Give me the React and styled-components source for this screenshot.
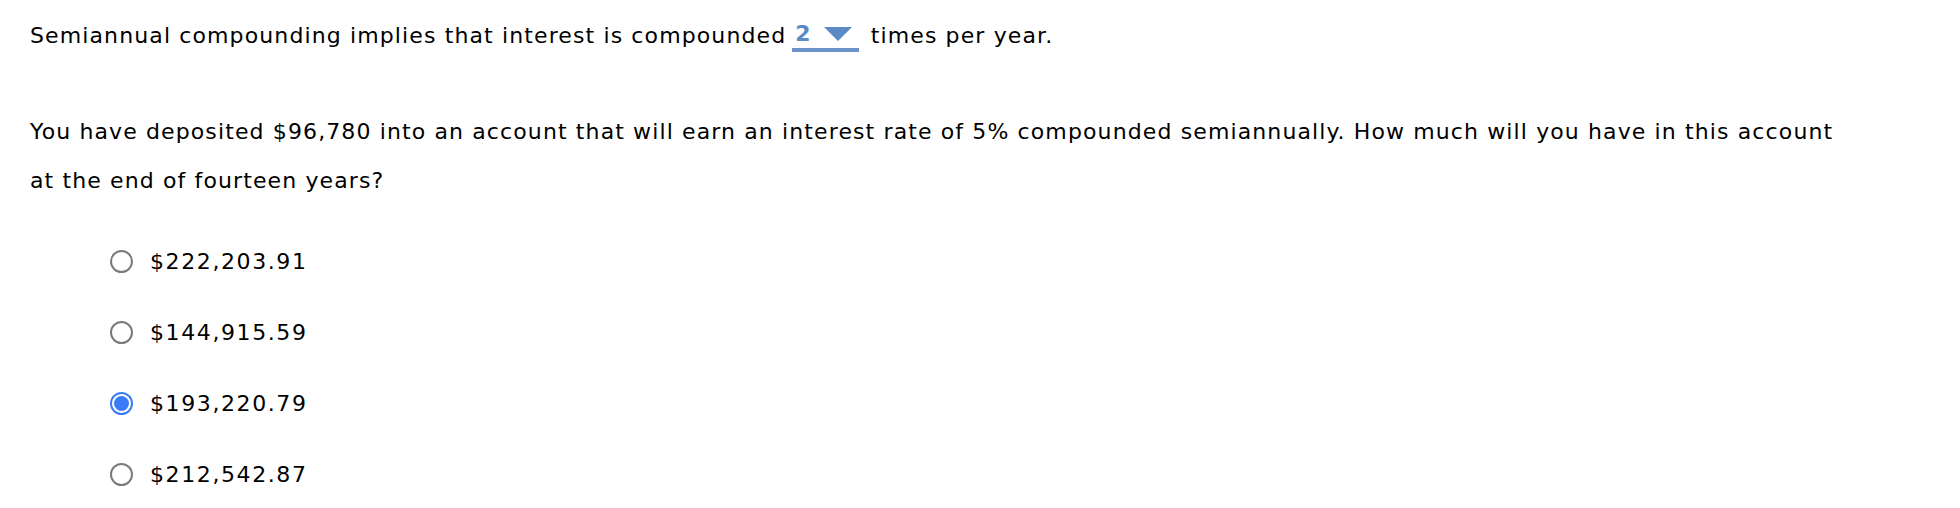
import React from "react"
import styled, { createGlobalStyle } from "styled-components"

const GlobalStyle = createGlobalStyle`
  html, body {
    margin: 0;
    padding: 0;
    background: #fff;
  }
  body {
    font-family: "DejaVu Sans", Verdana, sans-serif;
    color: #000;
  }
`

const Page = styled.div`
  padding: 16px 30px 0 30px;
  max-width: 1820px;
  font-size: 22px;
  letter-spacing: 1.12px;
`

const Line = styled.p`
  margin: 0;
  line-height: 40px;
  display: flex;
  align-items: center;
  white-space: pre;
`

const Question = styled.p`
  margin: 51px 0 0 0;
  line-height: 49px;
`

const Select = styled.span`
  display: inline-flex;
  align-items: center;
  gap: 12px;
  margin: 0 12px 0 6px;
  padding: 0 7px 0 3px;
  height: 31px;
  color: #5b8ac6;
  font-weight: bold;
  border-bottom: 4px solid #6b93c9;
  box-sizing: border-box;
`

const Caret = styled.svg`
  width: 28px;
  height: 14px;
  display: block;
`

const Options = styled.ul`
  list-style: none;
  margin: 41px 0 0 0;
  padding: 0 0 0 80px;
  display: flex;
  flex-direction: column;
  gap: 40px;
  letter-spacing: 1.6px;
`

const Option = styled.li`
  display: flex;
  align-items: center;
  gap: 17px;
  height: 31px;
`

const Radio = styled.span`
  width: 23px;
  height: 23px;
  border-radius: 50%;
  box-sizing: border-box;
  border: 2px solid ${({ checked }) => (checked ? "#3a7cf6" : "#7a7a7a")};
  display: flex;
  align-items: center;
  justify-content: center;
  &::after {
    content: "";
    width: 15px;
    height: 15px;
    border-radius: 50%;
    background: ${({ checked }) => (checked ? "#3a7cf6" : "transparent")};
  }
`

const answers = [
  { label: "$222,203.91" },
  { label: "$144,915.59" },
  { label: "$193,220.79", checked: true },
  { label: "$212,542.87" },
]

const App = () => {
  return (
    <>
      <GlobalStyle />
      <Page>
        <Line>
          Semiannual compounding implies that interest is compounded
          <Select>
            2
            <Caret viewBox="0 0 28 14">
              <polygon points="0,0 28,0 14,14" fill="#5b8ac6" />
            </Caret>
          </Select>
          times per year.
        </Line>
        <Question>
          You have deposited $96,780 into an account that will earn an interest rate of 5%
          compounded semiannually. How much will you have in this account at the end of
          fourteen years?
        </Question>
        <Options>
          {answers.map((a) => (
            <Option key={a.label}>
              <Radio checked={a.checked} />
              {a.label}
            </Option>
          ))}
        </Options>
      </Page>
    </>
  )
}

export default App
